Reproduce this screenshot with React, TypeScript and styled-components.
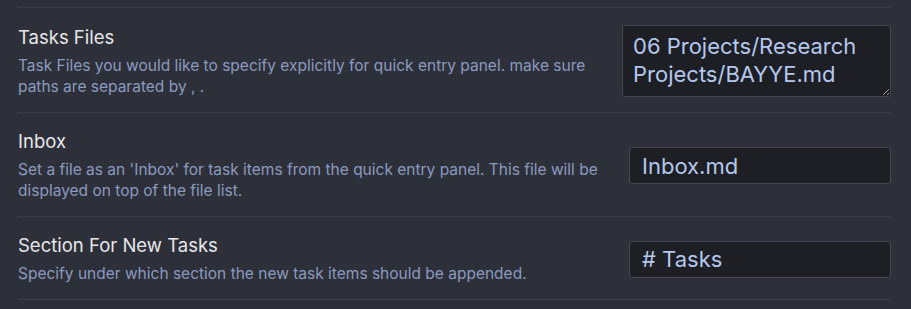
import styled, { createGlobalStyle } from 'styled-components';

const GlobalStyle = createGlobalStyle`
  html, body {
    margin: 0;
    padding: 0;
    background: #2e3039;
  }
  body {
    font-family: Inter, "Noto Sans", sans-serif;
    -webkit-font-smoothing: antialiased;
  }
`;

type Setting = {
  name: string;
  desc: string;
  value: string;
  multiline?: boolean;
};

const settings: Setting[] = [
  {
    name: 'Tasks Files',
    desc: 'Task Files you would like to specify explicitly for quick entry panel. make sure paths are separated by , .',
    value: '06 Projects/Research Projects/BAYYE.md',
    multiline: true,
  },
  {
    name: 'Inbox',
    desc: "Set a file as an 'Inbox' for task items from the quick entry panel. This file will be displayed on top of the file list.",
    value: 'Inbox.md',
  },
  {
    name: 'Section For New Tasks',
    desc: 'Specify under which section the new task items should be appended.',
    value: '# Tasks',
  },
];

const App = () => {
  return (
    <>
      <GlobalStyle />
      <Container>
        {settings.map((s) => (
          <Row key={s.name}>
            <Info>
              <Name>{s.name}</Name>
              <Desc>{s.desc}</Desc>
            </Info>
            <Control>
              {s.multiline ? (
                <TextArea defaultValue={s.value} rows={2} spellCheck={false} />
              ) : (
                <TextInput type="text" defaultValue={s.value} spellCheck={false} />
              )}
            </Control>
          </Row>
        ))}
      </Container>
    </>
  );
};

export default App;

const Container = styled.div`
  padding: 7px 20px 9px 17px;
`;

const Row = styled.div`
  display: flex;
  align-items: center;
  gap: 16px;
  padding: 17px 0 15px 1px;
  border-top: 1px solid #3c3f48;

  &:last-child {
    border-bottom: 1px solid #3c3f48;
  }
`;

const Info = styled.div`
  flex: 1;
  min-width: 0;
`;

const Name = styled.div`
  color: #e6e7ea;
  font-size: 18.5px;
  line-height: 22px;
  margin-bottom: 7px;
`;

const Desc = styled.div`
  color: #8a9ac0;
  font-size: 15.5px;
  line-height: 21px;
`;

const Control = styled.div`
  display: flex;
  justify-content: flex-end;
  width: 270px;
  flex-shrink: 0;
`;

const fieldBase = `
  box-sizing: border-box;
  background: #1e1f24;
  border: 1px solid #464951;
  border-radius: 3px;
  color: #b4c8ee;
  font-family: Inter, "Noto Sans", sans-serif;
  font-size: 22px;
  outline: none;
`;

const TextArea = styled.textarea`
  ${fieldBase}
  width: 269px;
  height: 72px;
  padding: 6px 10px;
  line-height: 28px;
  resize: vertical;
  overflow: hidden;
`;

const TextInput = styled.input`
  ${fieldBase}
  width: 262px;
  height: 37px;
  padding: 0 12px;
`;
